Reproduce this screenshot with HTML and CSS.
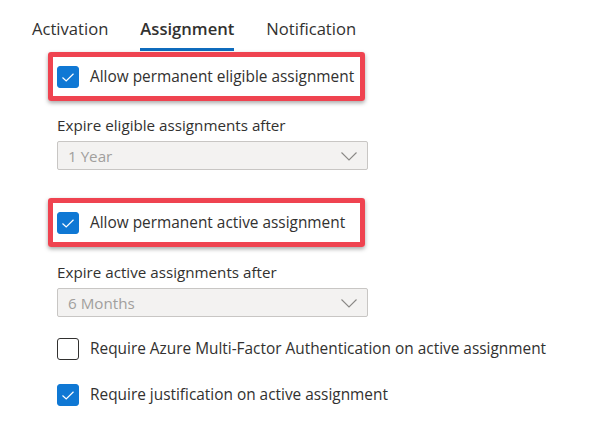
FILE: index.html
```html
<!DOCTYPE html>
<html lang="en">
<head>
<meta charset="utf-8">
<link rel="stylesheet" href="styles.css">
</head>
<body>
<div class="page">
  <nav class="tabs">
    <span class="tab">Activation</span>
    <span class="tab active">Assignment</span>
    <span class="tab">Notification</span>
  </nav>
  <div class="content">
    <div class="highlight hl-first">
      <label class="check">
        <span class="box checked"><svg viewBox="0 0 22 22" width="22" height="22"><path d="M5.5 11.5 L9.2 15 L16.5 7.8" fill="none" stroke="#fff" stroke-width="1.2"/></svg></span>
        <span class="check-text">Allow permanent eligible assignment</span>
      </label>
    </div>
    <div class="field">
      <div class="field-label">Expire eligible assignments after</div>
      <div class="select"><span>1 Year</span><svg class="chev" viewBox="0 0 16 9" width="16" height="9"><path d="M0.5 0.5 L8 8 L15.5 0.5" fill="none" stroke="#8a8886" stroke-width="1.1"/></svg></div>
    </div>
    <div class="highlight hl-second">
      <label class="check">
        <span class="box checked"><svg viewBox="0 0 22 22" width="22" height="22"><path d="M5.5 11.5 L9.2 15 L16.5 7.8" fill="none" stroke="#fff" stroke-width="1.2"/></svg></span>
        <span class="check-text">Allow permanent active assignment</span>
      </label>
    </div>
    <div class="field field-second">
      <div class="field-label">Expire active assignments after</div>
      <div class="select"><span>6 Months</span><svg class="chev" viewBox="0 0 16 9" width="16" height="9"><path d="M0.5 0.5 L8 8 L15.5 0.5" fill="none" stroke="#8a8886" stroke-width="1.1"/></svg></div>
    </div>
    <label class="check plain mfa">
      <span class="box"></span>
      <span class="check-text">Require Azure Multi-Factor Authentication on active assignment</span>
    </label>
    <label class="check plain just">
      <span class="box checked"><svg viewBox="0 0 22 22" width="22" height="22"><path d="M5.5 11.5 L9.2 15 L16.5 7.8" fill="none" stroke="#fff" stroke-width="1.2"/></svg></span>
      <span class="check-text">Require justification on active assignment</span>
    </label>
  </div>
</div>
</body>
</html>
```
FILE: styles.css
```css
html, body {
  margin: 0;
  padding: 0;
  background: #ffffff;
}
body {
  font-family: "Open Sans", "Noto Sans", sans-serif;
  color: #323130;
  width: 602px;
  height: 448px;
  overflow: hidden;
}
.tabs {
  display: flex;
  padding-left: 32px;
  padding-top: 17px;
  gap: 32px;
}
.tab {
  font-size: 16.6px;
  line-height: 24px;
  height: 34px;
  box-sizing: border-box;
  color: #323130;
}
.tab.active {
  font-weight: 600;
  border-bottom: 3px solid #0f6cbd;
}
.content {
  padding-left: 57px;
  display: flex;
  flex-direction: column;
  align-items: flex-start;
}
.highlight {
  margin-left: -9px;
  width: 317px;
  height: 49px;
  box-sizing: border-box;
  border: 5px solid #ef4350;
  border-radius: 3px;
  box-shadow: 0 2px 4px rgba(0, 0, 0, 0.35);
  padding-left: 4px;
  display: flex;
  align-items: center;
}
.hl-first {
  margin-top: 1px;
}
.hl-second {
  margin-top: 28px;
}
.check {
  display: flex;
  align-items: center;
  font-size: 15.4px;
  line-height: 22px;
  color: #323130;
}
.box {
  width: 22px;
  height: 22px;
  box-sizing: border-box;
  border: 1px solid #323130;
  border-radius: 3px;
  margin-right: 11px;
  flex: none;
  display: flex;
}
.box.checked {
  background: #0f78d4;
  border-color: #0f78d4;
}
.box.checked svg {
  margin: -1px;
}
.field {
  margin-top: 14px;
}
.field-second {
  margin-top: 15px;
}
.field-label {
  font-size: 15.2px;
  line-height: 21px;
  color: #323130;
}
.select {
  margin-top: 5px;
  width: 311px;
  height: 29px;
  box-sizing: border-box;
  background: #f3f2f1;
  border: 1px solid #c8c6c4;
  border-radius: 2px;
  display: flex;
  align-items: center;
  justify-content: space-between;
  padding: 0 10px 0 10px;
  font-size: 15.2px;
  color: #a19f9d;
}
.chev {
  display: block;
  margin-top: 1px;
}
.plain.mfa {
  margin-top: 21px;
}
.plain.just {
  margin-top: 24px;
}
```
